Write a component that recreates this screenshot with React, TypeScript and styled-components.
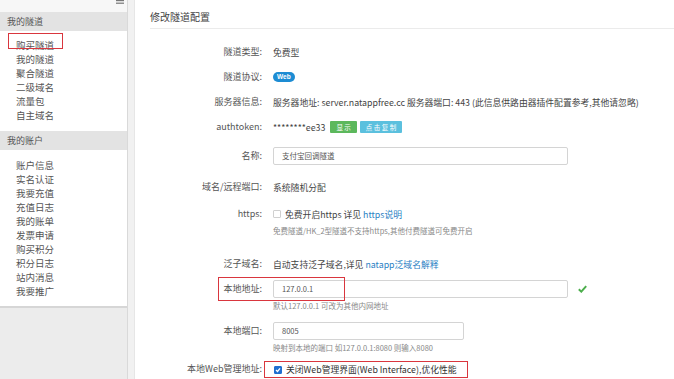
import React from 'react';
import styled, {createGlobalStyle} from 'styled-components';

const GlobalStyle = createGlobalStyle`
    html, body {
        margin: 0;
        padding: 0;
    }
    body {
        background: #f1f1f1;
        font-family: "Noto Sans CJK SC", "Noto Sans", sans-serif;
        color: #333;
        overflow: hidden;
    }
`

const tunnelMenu = ['购买隧道', '我的隧道', '聚合隧道', '二级域名', '流量包', '自主域名'];
const accountMenu = ['账户信息', '实名认证', '我要充值', '充值日志', '我的账单', '发票申请', '购买积分', '积分日志', '站内消息', '我要推广'];

function App() {
    return (
        <>
            <GlobalStyle/>
            <Layout>
                <Sidebar>
                    <TopStrip>
                        <svg width="8" height="5" viewBox="0 0 8 5">
                            <rect x="0" y="0" width="8" height="1.2" fill="#777"/>
                            <rect x="0" y="2.6" width="8" height="1.2" fill="#777"/>
                        </svg>
                    </TopStrip>
                    <MenuTitle>我的隧道</MenuTitle>
                    <MenuList>
                        {tunnelMenu.map((m, i) => (
                            <MenuItem key={m} $marked={i === 0}>{m}</MenuItem>
                        ))}
                    </MenuList>
                    <MenuTitle>我的账户</MenuTitle>
                    <MenuList $last>
                        {accountMenu.map((m) => (
                            <MenuItem key={m}>{m}</MenuItem>
                        ))}
                    </MenuList>
                </Sidebar>

                <Main>
                    <PanelTitle>修改隧道配置</PanelTitle>
                    <Form>
                        <Row $top={14}>
                            <Label>隧道类型:</Label>
                            <Value>免费型</Value>
                        </Row>
                        <Row $top={7}>
                            <Label>隧道协议:</Label>
                            <Value><Badge>Web</Badge></Value>
                        </Row>
                        <Row $top={7}>
                            <Label>服务器信息:</Label>
                            <Value>服务器地址: server.natappfree.cc 服务器端口: 443 (此信息供路由器插件配置参考,其他请忽略)</Value>
                        </Row>
                        <Row $top={7}>
                            <Label>authtoken:</Label>
                            <Value>
                                <Token>********ee33</Token>
                                <SmallButton $color="#5cb85c">显 示</SmallButton>
                                <SmallButton $color="#5bc0de">点 击 复 制</SmallButton>
                            </Value>
                        </Row>
                        <Row $top={11}>
                            <Label>名称:</Label>
                            <div><Input $width={295}>支付宝回调隧道</Input></div>
                        </Row>
                        <Row $top={13}>
                            <Label>域名/远程端口:</Label>
                            <Value>系统随机分配</Value>
                        </Row>
                        <Row $top={9}>
                            <Label>https:</Label>
                            <div>
                                <Value>
                                    <CheckBox/>
                                    免费开启https 详见&nbsp;<Link>https说明</Link>
                                </Value>
                                <Help>免费隧道/HK_2型隧道不支持https,其他付费隧道可免费开启</Help>
                            </div>
                        </Row>
                        <Row $top={19}>
                            <Label>泛子域名:</Label>
                            <Value>自动支持泛子域名,详见&nbsp;<Link>natapp泛域名解释</Link></Value>
                        </Row>
                        <Row $top={7}>
                            <Label>本地地址:</Label>
                            <div>
                                <InputLine>
                                    <Input $width={295}>127.0.0.1</Input>
                                    <svg width="9" height="8" viewBox="0 0 9 8">
                                        <path d="M0.8 4.2 L3.3 6.6 L8.2 1.2" fill="none" stroke="#4cae4c" strokeWidth="2"/>
                                    </svg>
                                </InputLine>
                                <Help>默认127.0.0.1 可改为其他内网地址</Help>
                            </div>
                            <Mark/>
                        </Row>
                        <Row $top={11}>
                            <Label>本地端口:</Label>
                            <div>
                                <Input $width={191}>8005</Input>
                                <Help>映射到本地的端口 如127.0.0.1:8080 则输入8080</Help>
                            </div>
                        </Row>
                        <Row $top={7}>
                            <Label>本地Web管理地址:</Label>
                            <Highlight>
                                <CheckBox $checked>
                                    <svg width="6" height="6" viewBox="0 0 6 6">
                                        <path d="M1 3.1 L2.5 4.5 L5 1.4" fill="none" stroke="#fff" strokeWidth="1.3"/>
                                    </svg>
                                </CheckBox>
                                关闭Web管理界面(Web Interface),优化性能
                            </Highlight>
                        </Row>
                    </Form>
                </Main>
            </Layout>
        </>
    );
}

const Layout = styled.div`
    display: flex;
    height: 379px;
    width: 674px;
    overflow: hidden;
`
const Sidebar = styled.aside`
    width: 127px;
    flex-shrink: 0;
    background: #ececec;
    border-right: 1px solid #d9d9d9;
    display: flex;
    flex-direction: column;
`
const TopStrip = styled.div`
    height: 12px;
    background: #f7f7f7;
    display: flex;
    justify-content: flex-end;
    align-items: flex-start;
    padding-right: 3px;
    overflow: hidden;
`
const MenuTitle = styled.div`
    height: 19px;
    line-height: 19px;
    background: #e3e3e3;
    padding-left: 7px;
    font-size: 9px;
    color: #555;
`
const MenuList = styled.ul<{ $last?: boolean }>`
    margin: 0;
    list-style: none;
    background: #fff;
    padding: ${p => p.$last ? '8px 0 8px' : '7px 0 9px'};
    border-bottom: ${p => p.$last ? '2px solid #d6d6d6' : 'none'};
`
const MenuItem = styled.li<{ $marked?: boolean }>`
    position: relative;
    line-height: 14px;
    padding-left: 16px;
    font-size: 9.5px;
    color: #555;
    &::after {
        content: '';
        display: ${p => p.$marked ? 'block' : 'none'};
        position: absolute;
        left: 8px;
        top: -5px;
        width: 53px;
        height: 14px;
        border: 1.5px solid #d9363e;
    }
`
const Main = styled.main`
    flex: 1;
    margin-left: 6px;
    background: #fff;
    border-left: 1px solid #e6e6e6;
`
const PanelTitle = styled.div`
    margin-left: 15px;
    padding: 8px 0 2px 0;
    line-height: 18px;
    font-size: 10px;
    color: #444;
    border-bottom: 1px solid #ebebeb;
`
const Form = styled.div`
    display: flex;
    flex-direction: column;
`
const Row = styled.div<{ $top: number }>`
    position: relative;
    display: grid;
    grid-template-columns: 127px 1fr;
    column-gap: 11px;
    align-items: start;
    margin-top: ${p => p.$top}px;
`
const Label = styled.div`
    text-align: right;
    line-height: 18px;
    font-size: 9px;
    color: #555;
    white-space: nowrap;
`
const Value = styled.div`
    display: flex;
    align-items: center;
    height: 18px;
    font-size: 8.8px;
    color: #444;
    white-space: nowrap;
`
const Badge = styled.span`
    display: inline-block;
    background: #1d8cd3;
    color: #fff;
    font-family: "Liberation Sans", sans-serif;
    font-weight: 700;
    font-size: 6.5px;
    line-height: 10px;
    padding: 0 4px;
    border-radius: 6px;
`
const Token = styled.span`
    margin-right: 5px;
`
const SmallButton = styled.span<{ $color: string }>`
    display: inline-block;
    background: ${p => p.$color};
    color: #fff;
    font-size: 6.5px;
    line-height: 12px;
    padding: 0 6px;
    margin-right: 3px;
    border-radius: 1px;
`
const Input = styled.div<{ $width: number }>`
    box-sizing: border-box;
    width: ${p => p.$width}px;
    height: 18px;
    line-height: 16px;
    border: 1px solid #d4d4d4;
    border-radius: 2px;
    padding-left: 8px;
    font-size: 7.5px;
    color: #555;
`
const InputLine = styled.div`
    display: flex;
    align-items: center;
    gap: 10px;
`
const Help = styled.div`
    margin-top: 3px;
    line-height: 10px;
    font-size: 7.5px;
    color: #888;
    white-space: nowrap;
`
const Link = styled.span`
    color: #2a7fc4;
`
const CheckBox = styled.span<{ $checked?: boolean }>`
    box-sizing: border-box;
    display: inline-flex;
    align-items: center;
    justify-content: center;
    width: 8px;
    height: 8px;
    margin-right: 4px;
    border: 1px solid ${p => p.$checked ? '#1f6fd0' : '#d0d0d0'};
    background: ${p => p.$checked ? '#1f6fd0' : '#fff'};
    border-radius: 1px;
`
const Mark = styled.div`
    position: absolute;
    left: 83px;
    top: -3px;
    width: 125px;
    height: 22px;
    border: 1.5px solid #d9363e;
    pointer-events: none;
`
const Highlight = styled.div`
    box-sizing: border-box;
    display: flex;
    align-items: center;
    width: fit-content;
    height: 17px;
    margin: 1px 0 0 -9px;
    padding: 0 10px 0 9px;
    border: 1.5px solid #d9363e;
    font-size: 8.8px;
    color: #333;
    white-space: nowrap;
`

export default App;
